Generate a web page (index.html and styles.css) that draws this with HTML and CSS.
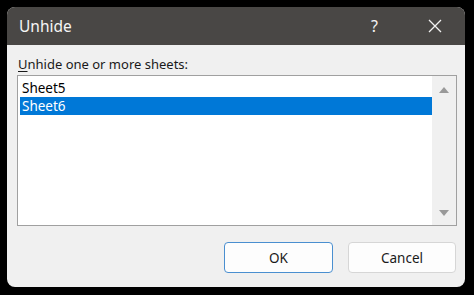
FILE: index.html
```html
<!DOCTYPE html>
<html lang="en">
<head>
    <meta charset="UTF-8">
    <title>Unhide</title>
    <link rel="stylesheet" href="styles.css">
</head>
<body>
    <div class="dialog">
        <div class="titlebar">
            <span class="title">Unhide</span>
            <span class="help">?</span>
            <svg class="close" width="14" height="14" viewBox="0 0 14 14">
                <path d="M1 1 L13 13 M13 1 L1 13" stroke="#f2f2f2" stroke-width="1.3" fill="none"/>
            </svg>
        </div>
        <div class="content">
            <div class="label"><u>U</u>nhide one or more sheets:</div>
            <div class="listbox">
                <div class="items">
                    <div class="item">Sheet5</div>
                    <div class="item selected">Sheet6</div>
                </div>
                <div class="scrollbar">
                    <svg width="10" height="6" viewBox="0 0 10 6"><path d="M0 6 L5 0 L10 6 Z" fill="#999"/></svg>
                    <svg width="10" height="6" viewBox="0 0 10 6"><path d="M0 0 L5 6 L10 0 Z" fill="#999"/></svg>
                </div>
            </div>
            <div class="buttons">
                <button class="ok">OK</button>
                <button class="cancel">Cancel</button>
            </div>
        </div>
    </div>
</body>
</html>
```

FILE: styles.css
```css
body {
    margin: 0;
    background-color: #000;
    font-family: "Noto Sans", "Open Sans", sans-serif;
}
.dialog {
    margin: 7px 0 0 7px;
    width: 458px;
    height: 280px;
    background-color: #f0f0f0;
    border-radius: 8px;
    overflow: hidden;
}
.titlebar {
    height: 38px;
    background-color: #494745;
    color: #f5f5f5;
    display: flex;
    align-items: center;
    padding-left: 12px;
}
.title {
    font-size: 15.5px;
    flex: 1;
}
.help {
    font-size: 16px;
    margin-right: 50px;
}
.close {
    margin-right: 23px;
}
.content {
    padding: 10px 8px 0 10px;
}
.label {
    font-size: 13px;
    color: #1a1a1a;
    padding-left: 1px;
    height: 20px;
}
.label u {
    text-decoration-thickness: 1px;
    text-underline-offset: 2px;
}
.listbox {
    height: 149px;
    border: 1px solid #a0a0a0;
    background-color: #fff;
    display: flex;
}
.items {
    flex: 1;
    padding: 3px 0 0 2px;
}
.item {
    height: 18px;
    line-height: 18px;
    font-size: 13.5px;
    padding-left: 2px;
    color: #000;
}
.item.selected {
    background-color: #0078d7;
    color: #fff;
}
.scrollbar {
    width: 24px;
    background-color: #f0f0f0;
    display: flex;
    flex-direction: column;
    justify-content: space-between;
    align-items: center;
    padding: 11px 0 9px;
}
.buttons {
    display: flex;
    justify-content: flex-end;
    gap: 15px;
    margin-top: 16px;
    padding-right: 1px;
}
button {
    height: 31px;
    font-family: "Noto Sans", "Open Sans", sans-serif;
    font-size: 13.5px;
    color: #1a1a1a;
    background-color: #fdfdfd;
    border: 1px solid #d6d6d6;
    border-radius: 4px;
}
.ok {
    width: 109px;
    border-color: #4a8fd0;
}
.cancel {
    width: 108px;
}
```
